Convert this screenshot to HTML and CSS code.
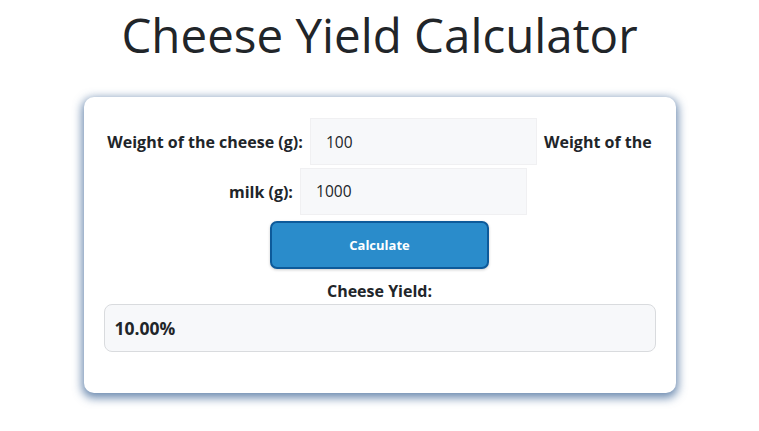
FILE: index.html
```html
<!DOCTYPE html>
<html>
<head>
<meta charset="utf-8">
<link rel="stylesheet" href="styles.css">
</head>
<body>
<h1 class="title">Cheese Yield Calculator</h1>
<div class="card">
  <div class="fields">
    <label class="lbl" for="cheese">Weight of the cheese (g):</label>
    <input class="inp" id="cheese" type="text" value="100">
    <label class="lbl" for="milk">Weight of the<br>milk (g):</label>
    <input class="inp inp2" id="milk" type="text" value="1000">
  </div>
  <div class="actions">
    <button class="btn" type="button">Calculate</button>
  </div>
  <div class="result-label">Cheese Yield:</div>
  <div class="result">10.00%</div>
</div>
</body>
</html>
```
FILE: styles.css
```css
html, body {
  margin: 0;
  padding: 0;
  background: #ffffff;
}
body {
  font-family: "Open Sans", "Noto Sans", sans-serif;
  color: #212529;
  padding-bottom: 20px;
}
.title {
  margin: 0;
  padding-top: 5px;
  height: 89px;
  box-sizing: border-box;
  text-align: center;
  font-weight: 400;
  font-size: 47.5px;
  line-height: 60px;
  color: #212529;
}
.card {
  width: 592px;
  height: 296px;
  margin: 8px auto 0;
  box-sizing: border-box;
  background: #fff;
  border-radius: 10px;
  padding: 20px 20px 0;
  box-shadow: 0 3px 10px 2px rgba(60, 100, 150, 0.75);
}
.fields {
  text-align: center;
  line-height: 48px;
  margin-top: -1px;
}
.lbl {
  font-weight: 700;
  font-size: 16px;
  vertical-align: middle;
}
.inp {
  width: 227px;
  height: 47px;
  box-sizing: border-box;
  border: 1px solid #f0f0f2;
  background: #f7f8fa;
  padding: 0 15px;
  font-family: inherit;
  font-size: 15.5px;
  color: #212529;
  vertical-align: middle;
  margin: 0 3px;
}
.actions {
  text-align: center;
  margin-top: 6px;
  line-height: 0;
}
.btn {
  width: 219px;
  height: 48px;
  border: 2px solid #0d5a9a;
  background: #2a8ccb;
  border-radius: 7px;
  color: #fff;
  font-family: inherit;
  font-weight: 700;
  font-size: 13px;
  box-shadow: 0 1px 3px rgba(0,0,0,0.2);
}
.result-label {
  text-align: center;
  font-weight: 700;
  font-size: 16px;
  margin-top: 11px;
  line-height: 22px;
}
.result {
  margin-top: 2px;
  height: 48px;
  box-sizing: border-box;
  border: 1px solid #d9dbde;
  background: #f7f8fa;
  border-radius: 8px;
  padding: 0 10px;
  font-weight: 700;
  font-size: 17.5px;
  line-height: 46px;
}
```
